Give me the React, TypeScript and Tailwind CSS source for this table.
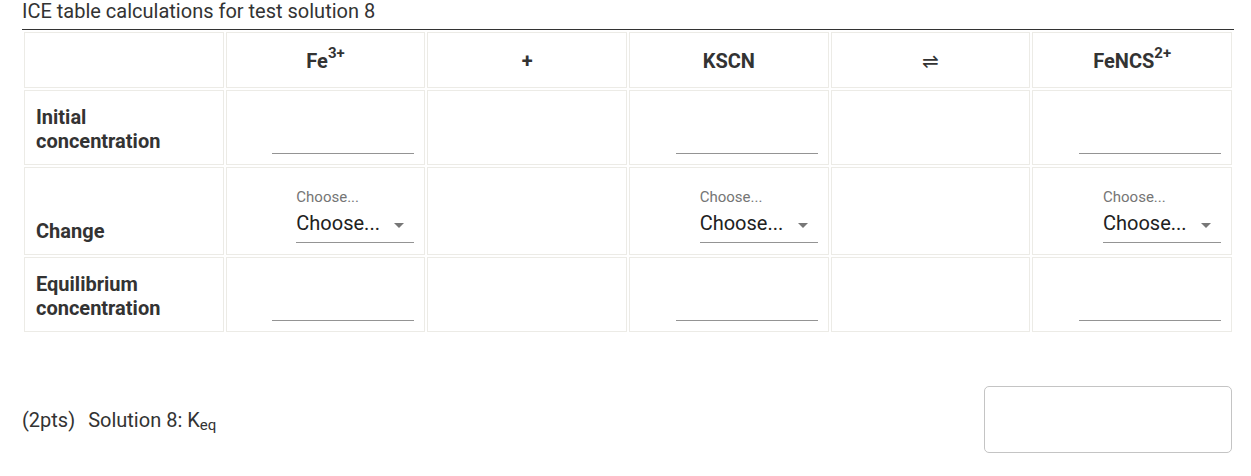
const font = { fontFamily: 'Roboto, "Liberation Sans", sans-serif' };

const cell = 'border border-[#ecebe6] bg-white';

const Blank = () => <div className={cell} />;

const Header = ({ children }: { children: React.ReactNode }) => (
  <div className={`${cell} flex items-center justify-center pt-[1px] text-[20px] font-bold leading-6 text-[#333]`}>
    {children}
  </div>
);

const Label = ({ children, bottom }: { children: React.ReactNode; bottom?: boolean }) => (
  <div
    className={`${cell} flex ${bottom ? 'items-end pb-[11px]' : 'items-center pt-[3px]'} pl-[11px] text-[20px] font-bold leading-6 text-[#333]`}
  >
    <div>{children}</div>
  </div>
);

const Blank_input = () => (
  <div className={`${cell} flex items-end justify-end pb-[10px] pr-[10px]`}>
    <input type="text" className="h-[30px] w-[142px] border-b border-[#949494] bg-transparent outline-none" />
  </div>
);

const Select = () => (
  <div className={`${cell} flex items-end justify-end pb-[11px] pr-[10px]`}>
    <div className="w-[118px]">
      <div className="mb-[7px] text-[15px] leading-[18px] text-[#757575]">Choose...</div>
      <div className="flex h-[30px] items-center justify-between border-b border-[#949494] pb-[10px] pr-[10px]">
        <span className="text-[20px] leading-6 text-[#212121]">Choose...</span>
        <span className="mt-[6px] h-0 w-0 border-x-[5px] border-t-[5px] border-x-transparent border-t-[#777]" />
      </div>
    </div>
  </div>
);

export default function App() {
  return (
    <div className="min-h-[476px] w-[1251px] bg-white" style={font}>
      <div className="ml-[22px] w-[1212px]">
        <div className="h-[30px] border-b border-[#333] text-[20px] leading-[22px] text-[#333]">
          ICE table calculations for test solution 8
        </div>

        <div className="grid grid-cols-6 grid-rows-[56px_75px_88px_75px] gap-[2px] p-[2px]">
          <Blank />
          <Header>
            Fe<sup>3+</sup>
          </Header>
          <Header>+</Header>
          <Header>KSCN</Header>
          <Header>
            <span className="font-normal" style={{ fontFamily: '"DejaVu Sans", sans-serif', fontSize: 20 }}>
              ⇌
            </span>
          </Header>
          <Header>
            FeNCS<sup>2+</sup>
          </Header>

          <Label>
            Initial
            <br />
            concentration
          </Label>
          <Blank_input />
          <Blank />
          <Blank_input />
          <Blank />
          <Blank_input />

          <Label bottom>Change</Label>
          <Select />
          <Blank />
          <Select />
          <Blank />
          <Select />

          <Label>
            Equilibrium
            <br />
            concentration
          </Label>
          <Blank_input />
          <Blank />
          <Blank_input />
          <Blank />
          <Blank_input />
        </div>

        <div className="mt-[52px] flex items-center justify-between pr-[2px]">
          <div className="text-[20px] leading-6 text-[#333]">
            (2pts)<span className="ml-[13px]">Solution 8: K<sub>eq</sub></span>
          </div>
          <input type="text" className="h-[67px] w-[248px] rounded-[5px] border border-[#c4c4c4] outline-none" />
        </div>
      </div>
    </div>
  );
}
